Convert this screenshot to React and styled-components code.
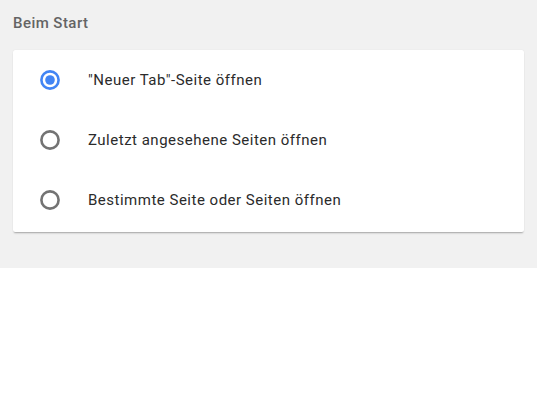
import React, { useState } from 'react'
import styled, { createGlobalStyle } from 'styled-components'

const GlobalStyle = createGlobalStyle`
  html, body {
    margin: 0;
    padding: 0;
    background: #fff;
  }
  body {
    font-family: Roboto, "Noto Sans", "Liberation Sans", sans-serif;
  }
`

const Section = styled.section`
  background: #f1f1f1;
  padding: 13px 13px 36px;
`

const Heading = styled.h2`
  margin: 0 0 16px;
  height: 21px;
  line-height: 21px;
  font-size: 15px;
  font-weight: 500;
  letter-spacing: 0.45px;
  color: #646464;
`

const Card = styled.div`
  background: #fff;
  border-radius: 2px;
  box-shadow: 0 0 1px rgba(0, 0, 0, .12), 0 2px 2px -1px rgba(0, 0, 0, .32);
  padding-bottom: 2px;
  display: flex;
  flex-direction: column;
`

const Row = styled.label`
  display: flex;
  align-items: center;
  height: 60px;
  padding-left: 27px;
  cursor: pointer;
`

const RadioBox = styled.span`
  display: flex;
  width: 20px;
  height: 20px;
  margin-right: 28px;
  flex: none;
`

const Label = styled.span`
  font-size: 15px;
  color: #2b2b2b;
  letter-spacing: 0.5px;
`

const Radio = ({ checked }) => (
  <RadioBox>
    <svg width="20" height="20" viewBox="0 0 20 20">
      <circle
        cx="10"
        cy="10"
        r="8.6"
        fill="none"
        stroke={checked ? '#4285f4' : '#737373'}
        strokeWidth="2.6"
      />
      {checked && <circle cx="10" cy="10" r="4.8" fill="#4285f4" />}
    </svg>
  </RadioBox>
)

const options = [
  '"Neuer Tab"-Seite öffnen',
  'Zuletzt angesehene Seiten öffnen',
  'Bestimmte Seite oder Seiten öffnen'
]

export default function App() {
  const [selected, setSelected] = useState(0)

  return (
    <>
      <GlobalStyle />
      <Section>
        <Heading>Beim Start</Heading>
        <Card>
          {options.map((text, i) => (
            <Row key={text} onClick={() => setSelected(i)}>
              <Radio checked={selected === i} />
              <Label>{text}</Label>
            </Row>
          ))}
        </Card>
      </Section>
    </>
  )
}
